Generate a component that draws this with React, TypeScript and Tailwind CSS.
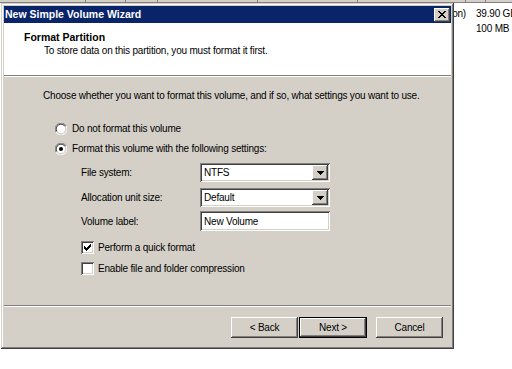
import React from "react";

const raised =
  "shadow-[inset_-1px_-1px_#404040,inset_1px_1px_#ffffff,inset_-2px_-2px_#808080,inset_2px_2px_#d4d0c8]";
const sunken =
  "shadow-[inset_1px_1px_#808080,inset_-1px_-1px_#ffffff,inset_2px_2px_#404040,inset_-2px_-2px_#d4d0c8]";

function Radio({ checked }: { checked?: boolean }) {
  return (
    <svg width="12" height="12" viewBox="0 0 12 12" className="shrink-0">
      <path d="M11 3 A5.5 5.5 0 0 0 3 1 A5.5 5.5 0 0 0 1 9" fill="none" stroke="#808080" strokeWidth="1" />
      <path d="M1 9 A5.5 5.5 0 0 0 9 11 A5.5 5.5 0 0 0 11 3" fill="none" stroke="#ffffff" strokeWidth="1" />
      <circle cx="6" cy="6" r="4.5" fill="#ffffff" stroke="none" />
      <path d="M10 3.5 A4.5 4.5 0 0 0 3.5 2 A4.5 4.5 0 0 0 2 8.5" fill="none" stroke="#404040" strokeWidth="1" />
      <path d="M2 8.5 A4.5 4.5 0 0 0 8.5 10 A4.5 4.5 0 0 0 10 3.5" fill="none" stroke="#d4d0c8" strokeWidth="1" />
      {checked && <circle cx="6" cy="6" r="2" fill="#000" />}
    </svg>
  );
}

function Check({ checked }: { checked?: boolean }) {
  return (
    <div className={`w-[13px] h-[13px] bg-white shrink-0 flex items-center justify-center ${sunken}`}>
      {checked && (
        <svg width="7" height="7" viewBox="0 0 7 7" shapeRendering="crispEdges">
          <rect x="6" y="0" width="1" height="1" fill="#000" />
          <rect x="5" y="1" width="2" height="1" fill="#000" />
          <rect x="0" y="2" width="1" height="1" fill="#000" />
          <rect x="4" y="2" width="3" height="1" fill="#000" />
          <rect x="0" y="3" width="2" height="1" fill="#000" />
          <rect x="3" y="3" width="3" height="1" fill="#000" />
          <rect x="0" y="4" width="5" height="1" fill="#000" />
          <rect x="1" y="5" width="3" height="1" fill="#000" />
          <rect x="2" y="6" width="1" height="1" fill="#000" />
        </svg>
      )}
    </div>
  );
}

function Combo({ value }: { value: string }) {
  return (
    <div className={`w-[130px] h-[19px] bg-white flex items-center p-[2px] ${sunken}`}>
      <span className="flex-1 pl-[2px] leading-[13px]">{value}</span>
      <div className={`w-[16px] h-[15px] bg-[#d4d0c8] flex items-center justify-center ${raised}`}>
        <svg width="7" height="4" viewBox="0 0 7 4" shapeRendering="crispEdges">
          <path d="M0 0h7v1h-1v1h-1v1h-1v1h-1v-1h-1v-1h-1v-1h-1z" fill="#000" />
        </svg>
      </div>
    </div>
  );
}

function Btn({ label, def }: { label: string; def?: boolean }) {
  return (
    <div
      className={`h-[21px] flex items-center justify-center bg-[#d4d0c8] ${
        def ? "w-[68px] border border-black" : "w-[67px]"
      } ${raised}`}
    >
      {label}
    </div>
  );
}

export default function App() {
  return (
    <div className="relative w-[512px] h-[369px] bg-white overflow-hidden text-[10px] tracking-[-0.2px] text-black font-['Liberation_Sans',Arial,sans-serif]">
      {/* background list view */}
      <div className="h-[3px] bg-[#d4d0c8] border-b border-[#808080] flex">
        <div className="w-[86px] border-r border-[#808080]" />
        <div className="w-[40px] border-r border-[#808080]" />
        <div className="w-[32px] border-r border-[#808080]" />
        <div className="w-[100px] border-r border-[#808080]" />
        <div className="w-[100px] border-r border-[#808080]" />
        <div className="w-[108px] border-r border-[#808080]" />
        <div className="w-[20px] border-r border-[#808080]" />
        <div className="flex-1" />
      </div>
      <div className="flex flex-col pt-[3px] whitespace-nowrap">
        <div className="flex h-[15px] items-center">
          <div className="w-[476px] shrink-0 text-right pr-[10px]">Healthy (System Partition)</div>
          <div className="shrink-0">39.90 GB</div>
        </div>
        <div className="flex h-[15px] items-center">
          <div className="w-[476px] shrink-0" />
          <div className="shrink-0">100 MB</div>
        </div>
      </div>

      {/* wizard window */}
      <div className="absolute left-[1px] top-[3px] w-[453px] h-[346px] bg-[#d4d0c8] p-[3px] flex flex-col shadow-[inset_-1px_-1px_#404040,inset_1px_1px_#d4d0c8,inset_-2px_-2px_#808080,inset_2px_2px_#ffffff]">
        <div className="h-[17px] bg-[#0a246a] flex items-center pl-[1px] pr-[1px] shrink-0">
          <span className="flex-1 text-white font-bold text-[10.5px] tracking-normal leading-[13px]">New Simple Volume Wizard</span>
          <div className={`w-[16px] h-[14px] bg-[#d4d0c8] flex items-center justify-center ${raised}`}>
            <svg width="8" height="7" viewBox="0 0 8 7" shapeRendering="crispEdges">
              <path d="M0 0h2v1h1v1h2v-1h1v-1h2v1h-1v1h-1v1h-1v1h1v1h1v1h1v1h-2v-1h-1v-1h-2v1h-1v1h-2v-1h1v-1h1v-1h1v-1h-1v-1h-1v-1h-1z" fill="#000" />
            </svg>
          </div>
        </div>
        <div className="h-[52px] bg-white pt-[8px] shrink-0">
          <div className="pl-[20px] font-bold text-[10.5px] tracking-normal leading-[13px]">Format Partition</div>
          <div className="pl-[40px] leading-[13px]">To store data on this partition, you must format it first.</div>
        </div>
        <div className="h-[2px] border-t border-[#808080] border-b border-b-white shrink-0" />
        <div className="flex-1 flex flex-col">
          <div className="flex-1 pl-[39px] pt-[12px]">
            <div className="leading-[13px] whitespace-nowrap">
              Choose whether you want to format this volume, and if so, what settings you want to use.
            </div>
            <div className="mt-[20px] ml-[12px] flex items-center gap-[5px] h-[13px]">
              <Radio />
              <span>Do not format this volume</span>
            </div>
            <div className="mt-[7px] ml-[12px] flex items-center gap-[5px] h-[13px]">
              <Radio checked />
              <span>Format this volume with the following settings:</span>
            </div>
            <div className="ml-[38px] mt-[8px] flex items-center">
              <span className="w-[119px]">File system:</span>
              <Combo value="NTFS" />
            </div>
            <div className="ml-[38px] mt-[6px] flex items-center">
              <span className="w-[119px]">Allocation unit size:</span>
              <Combo value="Default" />
            </div>
            <div className="ml-[38px] mt-[4px] flex items-center">
              <span className="w-[119px]">Volume label:</span>
              <div className={`w-[130px] h-[20px] bg-white flex items-center pl-[4px] ${sunken}`}>New Volume</div>
            </div>
            <div className="ml-[38px] mt-[10px] flex items-center gap-[4px] h-[13px]">
              <Check checked />
              <span>Perform a quick format</span>
            </div>
            <div className="ml-[38px] mt-[8px] flex items-center gap-[4px] h-[13px]">
              <Check />
              <span>Enable file and folder compression</span>
            </div>
          </div>
          <div className="h-[2px] border-t border-[#808080] border-b border-b-white shrink-0" />
          <div className="h-[39px] pt-[10px] flex items-start pl-[227px] shrink-0">
            <Btn label="< Back" />
            <div className="w-[1px]" />
            <Btn label="Next >" def />
            <div className="w-[9px]" />
            <Btn label="Cancel" />
          </div>
        </div>
      </div>
    </div>
  );
}
